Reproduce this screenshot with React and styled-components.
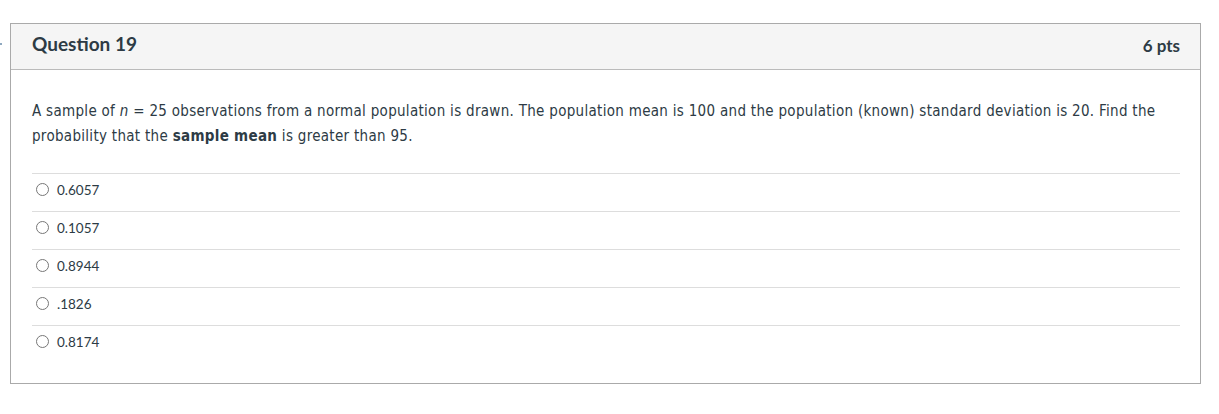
import React from "react";
import styled, { createGlobalStyle } from "styled-components";

const Global = createGlobalStyle`
  html, body { margin: 0; padding: 0; background: #fff; }
  body { font-family: Lato, "Noto Sans", sans-serif; color: #2d3b45; }
`;

const Page = styled.div`
  padding: 23px 18px 0 10px;
  position: relative;
`;

const Marker = styled.span`
  position: absolute;
  left: 0;
  top: 43px;
  width: 2px;
  height: 2px;
  background: #8fa9c0;
`;

const Card = styled.div`
  border: 1px solid #aaa;
  background: #fff;
`;

const Header = styled.div`
  display: flex;
  align-items: center;
  justify-content: space-between;
  height: 45px;
  padding: 0 20px 0 21px;
  background: #f5f5f5;
  border-bottom: 1px solid #bbb;
`;

const Title = styled.h2`
  margin: 0 0 6px;
  font-family: Lato, sans-serif;
  font-weight: 700;
  font-size: 19px;
  color: #2d3b45;
`;

const Points = styled.div`
  margin-bottom: 2px;
  font-family: Lato, sans-serif;
  font-weight: 700;
  font-size: 17px;
  color: #2d3b45;
`;

const Body = styled.div`
  padding: 29px 20px 20px 21px;
`;

const Prompt = styled.p`
  margin: 0 0 24px;
  font-family: "DejaVu Sans Condensed", "DejaVu Sans", Verdana, sans-serif;
  font-size: 15px;
  letter-spacing: 0.3px;
  line-height: 25px;
  color: #2d3b45;
  strong { font-weight: 700; }
  em { font-style: italic; }
`;

const Answers = styled.div`
  display: flex;
  flex-direction: column;
`;

const Answer = styled.label`
  display: flex;
  align-items: center;
  gap: 8px;
  height: 31px;
  padding: 0 0 6px 4px;
  border-top: 1px solid #ddd;
  font-family: Lato, sans-serif;
  font-size: 13.5px;
  color: #2d3b45;
`;

const Radio = styled.span`
  width: 11px;
  height: 11px;
  border: 1px solid #777;
  border-radius: 50%;
  flex: none;
`;

const answers = ["0.6057", "0.1057", "0.8944", ".1826", "0.8174"];

export default function App() {
  return (
    <>
      <Global />
      <Page>
        <Marker />
        <Card>
          <Header>
            <Title>Question 19</Title>
            <Points>6 pts</Points>
          </Header>
          <Body>
            <Prompt>
              A sample of <em>n</em> = 25 observations from a normal population is drawn. The population mean is 100 and the population (known) standard deviation is 20. Find the probability that the <strong>sample mean</strong> is greater than 95.
            </Prompt>
            <Answers>
              {answers.map((a) => (
                <Answer key={a}>
                  <Radio />
                  {a}
                </Answer>
              ))}
            </Answers>
          </Body>
        </Card>
      </Page>
    </>
  );
}
